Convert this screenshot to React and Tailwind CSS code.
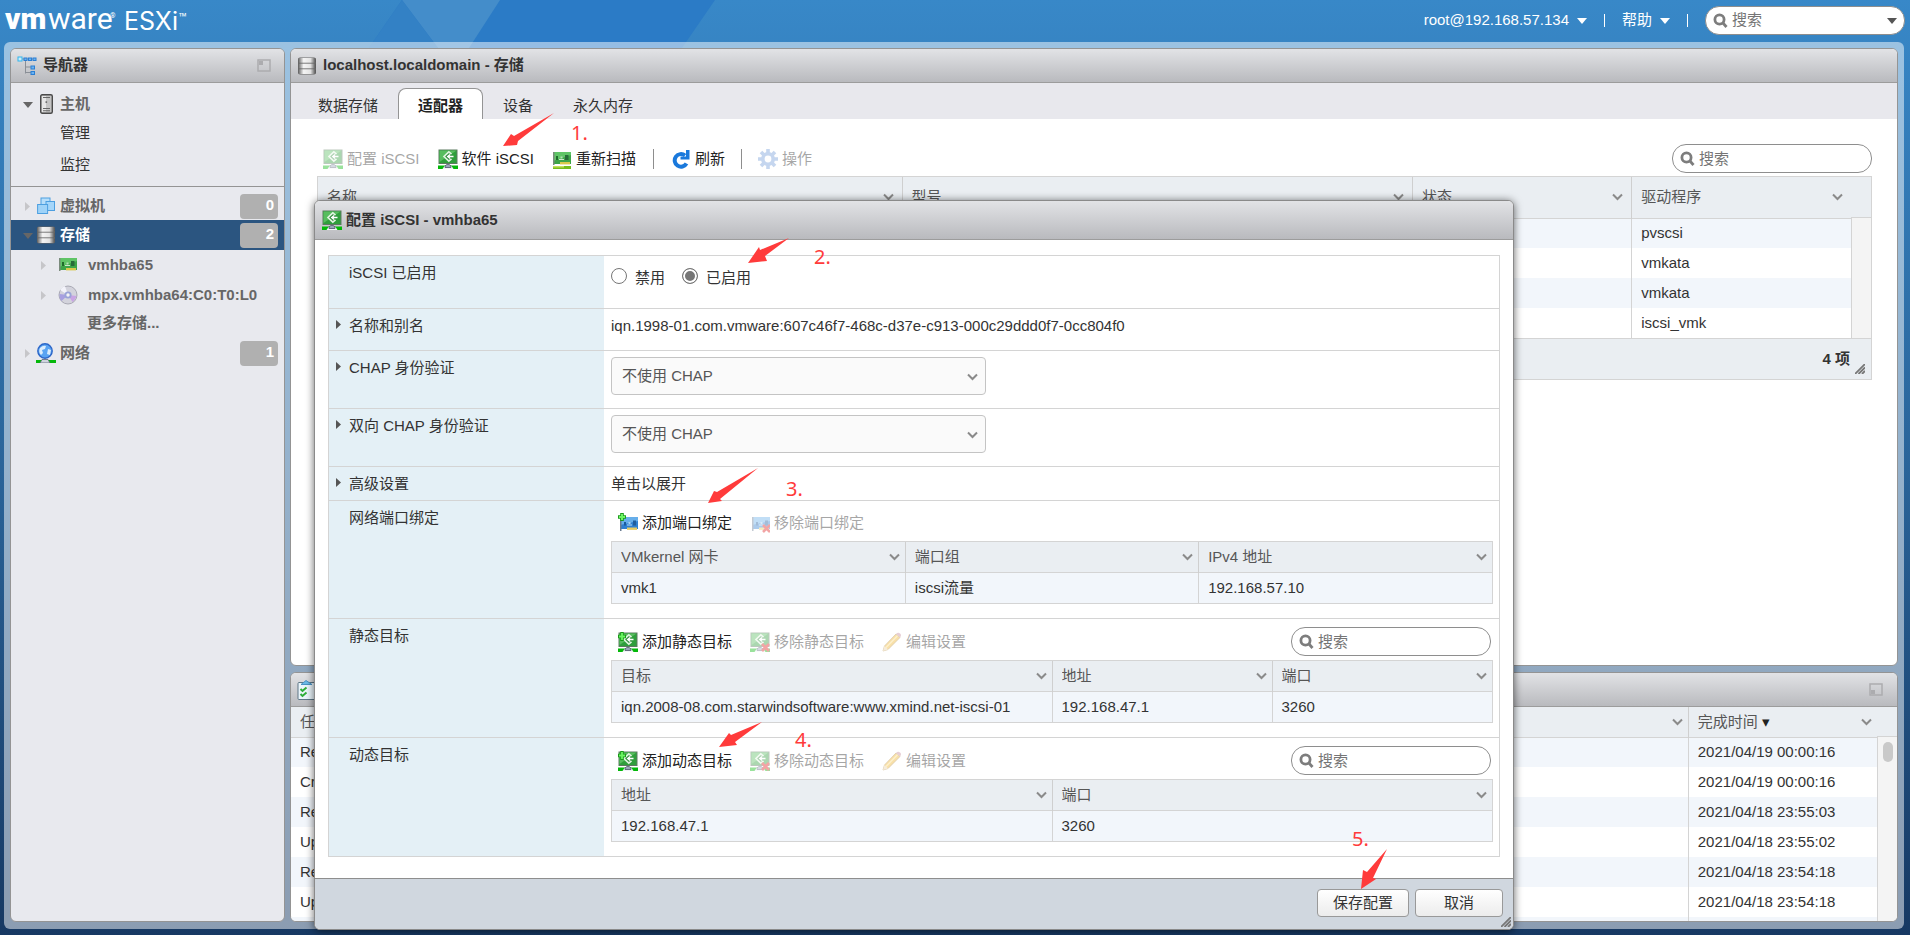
import React, { useState } from 'react';

const navIcons = { caretDown: 'M0 0h10L5 6z', caretRight: 'M0 0v9l5-4.5z' };

const Caret = ({ open, className }) => (
  <svg className={className} width="10" height="9" viewBox="0 0 10 9" fill="currentColor">
    {open ? <path transform="translate(0 2)" d={navIcons.caretDown} /> : <path transform="translate(2 0)" d={navIcons.caretRight} />}
  </svg>
);

const Chevron = () => (
  <svg className="shrink-0" width="11" height="8" viewBox="0 0 11 8" fill="none" stroke="#8a8a8a" strokeWidth="2">
    <path d="M1 1.5l4.5 4.5L10 1.5" />
  </svg>
);

const TargetIcon = ({ badge }) => (
  <svg className="shrink-0" width="20" height="20" viewBox="0 0 20 20">
    <rect x="1" y="1" width="18" height="13.5" fill="#2f9e3c" stroke="#5c7a60" />
    <path d="M1.5 1.5h17L1.5 13z" fill="#57bd5e" />
    <path d="M13.5 5.2L10.8 2.9 6 7.5l4.8 4.6 2.7-2.3" fill="#2c8a38" stroke="#dff3df" strokeWidth="1.7" />
    <path d="M15.5 7.5H10M12 5.500l-2.300 2 2.300 2" fill="none" stroke="#fff" strokeWidth="1.4" />
    <rect x="0" y="16.5" width="20" height="3.5" fill="#04b80a" />
    <path d="M4.500 20l2-3h7l2 3z" fill="#f2f4f8" />
    <path d="M7 17q3-3.500 6 0v1.500H7z" fill="#9aa5bb" stroke="#4d5568" strokeWidth=".8" />
    {badge === 'add' && <path d="M4 0v9M0 4.500h8" stroke="#189a18" strokeWidth="3.4" />}
    {badge === 'add' && <path d="M4 1v7M1 4.500h6" stroke="#6bf562" strokeWidth="1.8" />}
    {badge === 'remove' && <path d="M12 12l7 7M19 12l-7 7" stroke="#e02020" strokeWidth="2.8" />}
  </svg>
);

const CardIcon = ({ rescan }) => (
  <svg className="shrink-0" width="20" height="20" viewBox="0 0 20 20">
    <path d="M1 3h18v12H1z" fill="#3da548" />
    <path d="M1 3h18v3L1 12z" fill="#5fc466" />
    <path d="M1 3h1.5v13H1z" fill="#7a8b7c" />
    <rect x="4" y="7" width="2" height="4" fill="#1f6b2b" />
    <path d="M7 10.500h5" stroke="#c9e8ca" />
    <rect x="8.500" y="7.500" width="2" height="2" fill="#b4deb6" />
    <rect x="13" y="6" width="3.5" height="5" fill="#276b38" />
    <rect x="8" y="13" width="10" height="2.4" fill="#d8c94c" />
    {rescan && <rect x="1" y="17" width="18" height="3" fill="#76bd1c" />}
    {rescan && <rect x="1" y="17" width="11" height="1.5" fill="#c6e05a" />}
  </svg>
);

const NicIcon = ({ badge }) => (
  <svg className="shrink-0" width="20" height="20" viewBox="0 0 20 20">
    <rect x="2" y="4" width="18" height="12" fill="#2f7fd0" />
    <path d="M2 4h18v4L2 12z" fill="#66aeea" />
    <rect x="2" y="4" width="1.5" height="14" fill="#6a7c92" />
    <rect x="6" y="9" width="2" height="3.5" fill="#1b5a9c" />
    <path d="M9 12h5" stroke="#b5daf5" />
    <rect x="10.500" y="9" width="2" height="2" fill="#a5d0f2" />
    <rect x="15" y="7.500" width="3" height="5" fill="#1f5c9c" />
    <rect x="9" y="14.500" width="10" height="2.4" fill="#e8cb62" />
    {badge === 'add' && <path d="M4 0v8M0 4h8" stroke="#1c9a1c" strokeWidth="3.6" />}
    {badge === 'add' && <path d="M4 1v6M1 4h6" stroke="#6bf562" strokeWidth="2" />}
    {badge === 'remove' && <path d="M13 12l7 7M20 12l-7 7" stroke="#e02020" strokeWidth="2.6" />}
  </svg>
);

const PencilIcon = () => (
  <svg className="shrink-0" width="20" height="20" viewBox="0 0 20 20">
    <path d="M1 19l1.5-5L14 2l4 3.5L6 17.5z" fill="#f0b429" stroke="#a87a2a" strokeWidth=".8" />
    <path d="M14 2q2-2 4-.5t0 4z" fill="#c48a9a" />
    <path d="M1 19l1.5-5L6 17.5z" fill="#e9d2a8" />
    <path d="M4 15.5L15.5 3.8" stroke="#fbdc85" strokeWidth="1.3" />
  </svg>
);

const RefreshIcon = () => (
  <svg className="shrink-0" width="20" height="20" viewBox="0 0 20 20">
    <path d="M15.500 14.500A6.300 6.300 0 1 1 14 6.500" fill="none" stroke="#1a79dc" strokeWidth="4" />
    <path d="M9.500 10.500h9V1h-3.500v6.500H9.500z" fill="#1a79dc" />
  </svg>
);

const GearIcon = () => (
  <svg className="shrink-0" width="20" height="20" viewBox="0 0 20 20">
    <g stroke="#6f9ad8" strokeWidth="3.6">
      <path d="M10 0v20M0 10h20M3 3l14 14M17 3L3 17" />
    </g>
    <circle cx="10" cy="10" r="7" fill="#6f9ad8" />
    <circle cx="10" cy="10" r="3.4" fill="#fff" />
  </svg>
);

const StorageIcon = () => (
  <svg className="shrink-0" width="18" height="18" viewBox="0 0 18 18">
    <defs>
      <linearGradient id="disk" x1="0" x2="1" y1="0" y2="0">
        <stop offset="0" stopColor="#6b6b6b" />
        <stop offset=".3" stopColor="#f4f4f4" />
        <stop offset=".7" stopColor="#e4e4e4" />
        <stop offset="1" stopColor="#555" />
      </linearGradient>
    </defs>
    <rect x="0" y=".5" width="18" height="17" rx="2" fill="#666" />
    <rect x=".500" y="1" width="17" height="4.8" rx="1" fill="url(#disk)" />
    <rect x=".500" y="6.600" width="17" height="4.8" fill="url(#disk)" />
    <rect x=".500" y="12.200" width="17" height="4.8" rx="1" fill="url(#disk)" />
  </svg>
);

const HostIcon = () => (
  <svg className="shrink-0" width="13" height="20" viewBox="0 0 13 20">
    <rect x=".7" y=".7" width="11.6" height="18.6" rx="1.5" fill="#c4c4c4" stroke="#4a4a4a" strokeWidth="1.4" />
    <path d="M2 2h4v16H2z" fill="#e6e6e6" />
    <path d="M3 3.500h7M3 14.500h7M3 16.800h7" stroke="#666" strokeWidth="1.1" />
    <rect x="5.500" y="7.300" width="1.6" height="1.6" fill="#666" />
  </svg>
);

const VmIcon = () => (
  <svg className="shrink-0" width="18" height="18" viewBox="0 0 18 18" fill="#b7defa" stroke="#4d9fe0">
    <rect x="4" y="1" width="9" height="9" />
    <rect x="9" y="4.500" width="8.500" height="9" fill="#a5d6fa" />
    <rect x=".6" y="7.500" width="10" height="9" fill="#9fd3f8" />
  </svg>
);

const DiscIcon = () => (
  <svg className="shrink-0" width="20" height="20" viewBox="0 0 20 20">
    <circle cx="10" cy="10" r="9" fill="#d3d3dc" stroke="#a9a9b4" />
    <path d="M10 10L2 5a9 9 0 0 1 5-4z" fill="#f3f3fa" />
    <path d="M10 10L1.500 9a9 9 0 0 0 2 7z" fill="#a8a0e0" />
    <path d="M10 10l8.500 1a9 9 0 0 1-4 6z" fill="#c9a4e4" />
    <circle cx="10" cy="10" r="3.600" fill="#9aa3d8" />
    <circle cx="10" cy="10" r="1.700" fill="#f4f4f4" />
  </svg>
);

const NetworkIcon = () => (
  <svg className="shrink-0" width="20" height="20" viewBox="0 0 20 20">
    <circle cx="9" cy="8" r="7.200" fill="#5aa4f2" stroke="#2c66c8" strokeWidth="1.400" />
    <path d="M4 5q3-3 6-2l-1 3-3 1 1 3-2 2q-3-3-1-7zM12 6l3 1-1 5-3-1z" fill="#dcedfc" />
    <rect x="0" y="17" width="20" height="3" fill="#04b80a" />
    <path d="M4 20l2-3.500h6l2 3.500z" fill="#cfd5de" stroke="#5a6478" strokeWidth=".8" />
  </svg>
);

const TreeIcon = () => (
  <svg className="shrink-0" width="20" height="20" viewBox="0 0 20 20" fill="#6cb3f0" stroke="#2b7fd4">
    <path d="M2 3h16M8.500 3v14.500M8.500 11h6M8.500 16.500h6" fill="none" stroke="#8a8f96" />
    <rect x="1" y="1" width="4" height="4" stroke="#31b5ee" fill="#c9edfb" />
    <rect x="7" y="2" width="3" height="2.500" />
    <rect x="11.500" y="2" width="3" height="2.500" />
    <rect x="16" y="2" width="3" height="2.500" />
    <rect x="14" y="10" width="3.500" height="3" />
    <rect x="14" y="15.500" width="3.500" height="3" />
  </svg>
);

const TasksIcon = () => (
  <svg className="shrink-0" width="20" height="20" viewBox="0 0 20 20">
    <rect x="1" y="2.500" width="17" height="17" rx="1" fill="#eaf5fb" stroke="#5e7787" />
    <path d="M4 4.500L9 .5l6 4z" fill="#6bbbe8" stroke="#4a93c4" />
    <path d="M3.500 9l2 2 4-3.500M3.500 14l2 2 4-3.500" fill="none" stroke="#2fae3a" strokeWidth="2" />
  </svg>
);

const RestoreIcon = ({ low }) => (
  <svg width="14" height="13" viewBox="0 0 14 13" fill="none" stroke="#acacaf" strokeWidth="1.5">
    <rect x="1" y="1" width="12" height="11" />
    <rect x="2" y={low ? 7 : 2} width="4" height="4" fill="#acacaf" stroke="none" />
  </svg>
);

const Grip = () => (
  <svg width="10" height="10" viewBox="0 0 10 10" stroke="#777" strokeWidth="1.800">
    <path d="M0 10L10 0M3.500 10L10 3.500M7 10l3-3" />
  </svg>
);

const SearchBox = ({ label, arrow }) => (
  <label className="flex h-[29px] w-[200px] items-center rounded-[14px] border border-[#8e8e8e] bg-white px-[7px]">
    <svg className="shrink-0" width="15" height="15" viewBox="0 0 15 15" fill="none" stroke="#7d7d7d" strokeWidth="2.800">
      <circle cx="6.500" cy="6.500" r="4.600" />
      <path d="M9.500 9.500l4 4.500" />
    </svg>
    <input
      type="text"
      aria-label={label}
      placeholder="搜索"
      className="ml-1 min-w-0 flex-1 bg-transparent text-[15px] text-[#333] outline-none placeholder:text-[#757575]"
    />
    {arrow && <Caret open className="text-[#555]" />}
  </label>
);

const ToolButton = ({ icon, disabled, children }) => (
  <button type="button" disabled={disabled} className="flex items-center gap-1 px-[9px] whitespace-nowrap text-[#222] disabled:opacity-40">
    {icon}
    {children}
  </button>
);

const Panel = ({ as: Tag = 'section', title, icon, action, className, children }) => (
  <Tag className={`flex flex-col overflow-hidden rounded-md border border-[#949494] ${className}`}>
    <header className="flex h-[34px] shrink-0 items-center border-b border-[#9c9c9c] bg-linear-to-b from-[#e2e3e6] to-[#b9babe] px-[6px]">
      <span className="flex w-5 justify-center">{icon}</span>
      <h2 className="ml-[6px] flex-1 pb-0.5 font-bold text-[#333]">{title}</h2>
      {action}
    </header>
    {children}
  </Tag>
);

const DataGrid = ({ columns, rows, head, row, chevronPad = 'pr-[5px]' }) => (
  <table className="w-full table-fixed border-collapse text-left">
    <thead>
      <tr className={`border-b border-[#d4d4d4] bg-[#eaeef2] text-[#565656] ${head}`}>
        {columns.map((col, i) => (
          <th key={i} className={`p-0 font-normal ${col.width} ${i > 0 ? 'border-l border-[#cfcfcf]' : ''}`}>
            <div className={`flex items-center pl-[9px] ${chevronPad}`}>
              <span className="flex-1 truncate">
                {col.label}
                {col.sorted && <span className="ml-1 text-[#222]">▾</span>}
              </span>
              <Chevron />
            </div>
          </th>
        ))}
      </tr>
    </thead>
    <tbody>
      {rows.map((cells, r) => (
        <tr key={r} className={`odd:bg-[#f2f6fb] ${row}`}>
          {cells.map((cell, i) => (
            <td key={i} className={`truncate p-0 pl-[9px] ${i > 0 ? 'border-l border-[#d4d4d4]' : ''}`}>{cell}</td>
          ))}
        </tr>
      ))}
    </tbody>
  </table>
);

const NavRow = ({ open, icon, label, count, active, height = 'h-[30px]' }) => (
  <a href="#nav" className={`flex items-center pr-[6px] pl-3 font-bold ${height} ${active ? 'bg-[#2b5580] text-white' : 'text-[#666]'}`}>
    <Caret open={open} className={open ? 'text-[#666]' : 'text-[#c6c6c9]'} />
    <span className="mr-1 ml-[3px] flex w-5 justify-center">{icon}</span>
    <span className="flex-1">{label}</span>
    {count !== undefined && (
      <span className="flex h-[25px] w-[38px] items-center justify-end rounded-sm bg-[#b0b0b0] pr-1 pb-0.5 text-white">{count}</span>
    )}
  </a>
);

const NavChild = ({ icon, label }) => (
  <a href="#nav" className="flex h-[30px] items-center pl-[28px] font-bold text-[#666]">
    <Caret className="text-[#c6c6c9]" />
    <span className="mr-[10px] ml-[9px] flex">{icon}</span>
    {label}
  </a>
);

const Navigator = () => (
  <Panel as="nav" title="导航器" icon={<TreeIcon />} action={<span className="mr-[7px]"><RestoreIcon /></span>} className="w-[275px] shrink-0 bg-[#e8e9ee]">
    <div className="border-b border-[#949494] pt-[6px] pb-[3px]">
      <NavRow open icon={<HostIcon />} label="主机" />
      <a href="#manage" className="flex h-7 items-center pl-[49px] text-[#333]">管理</a>
      <a href="#monitor" className="flex h-9 items-center pl-[49px] text-[#333]">监控</a>
    </div>
    <div className="pt-[5px]">
      <NavRow icon={<VmIcon />} label="虚拟机" count={0} height="h-7" />
      <NavRow open active icon={<StorageIcon />} label="存储" count={2} />
      <NavChild icon={<CardIcon />} label="vmhba65" />
      <NavChild icon={<DiscIcon />} label="mpx.vmhba64:C0:T0:L0" />
      <a href="#more" className="flex h-[25px] items-center pl-[76px] font-bold text-[#666]">更多存储...</a>
      <NavRow icon={<NetworkIcon />} label="网络" count={1} height="h-9" />
    </div>
  </Panel>
);

const adapterColumns = [
  { label: '名称', width: 'w-[38.1%]' },
  { label: '型号', width: 'w-[33.3%]' },
  { label: '状态', width: 'w-[14.3%]' },
  { label: '驱动程序', width: 'w-[14.3%]' },
];

const adapterRows = [
  ['', '', '', 'pvscsi'],
  ['', '', '', 'vmkata'],
  ['', '', '', 'vmkata'],
  ['', '', '', 'iscsi_vmk'],
];

const tabs = ['数据存储', '适配器', '设备', '永久内存'];

const StoragePanel = () => {
  const [tab, setTab] = useState('适配器');

  return (
    <Panel as="main" title="localhost.localdomain - 存储" icon={<StorageIcon />} className="flex-1 bg-white">
      <div role="tablist" className="flex h-9 items-end bg-[#e8e8ed] pl-[7px]">
        {tabs.map((t) => (
          <button
            key={t}
            type="button"
            role="tab"
            aria-selected={t === tab}
            onClick={() => setTab(t)}
            className={`h-[31px] rounded-t-lg border border-b-0 px-[19px] pt-1 ${
              t === tab ? 'border-[#949494] bg-white font-bold text-[#222]' : 'border-transparent text-[#333]'
            }`}
          >
            {t}
          </button>
        ))}
      </div>
      <div className="flex h-[57px] items-center pt-[22px] pr-[25px] pl-[23px]">
        <ToolButton disabled icon={<TargetIcon />}>配置 iSCSI</ToolButton>
        <ToolButton icon={<TargetIcon />}>软件 iSCSI</ToolButton>
        <ToolButton icon={<CardIcon rescan />}>重新扫描</ToolButton>
        <span className="mx-2 h-5 w-px bg-[#8e8e8e]" />
        <ToolButton icon={<RefreshIcon />}>刷新</ToolButton>
        <span className="mx-[7px] h-5 w-px bg-[#8e8e8e]" />
        <ToolButton disabled icon={<GearIcon />}>操作</ToolButton>
        <div className="ml-auto">
          <SearchBox label="搜索适配器" />
        </div>
      </div>
      <div className="mr-[25px] ml-[26px] border border-[#d4d4d4]">
        <div className="flex">
          <div className="min-w-0 flex-1">
            <DataGrid columns={adapterColumns} rows={adapterRows} head="h-[41px]" row="h-[30px]" chevronPad="pr-2" />
          </div>
          <div className="flex w-5 flex-col">
            <div className="h-[41px] border-b border-[#d4d4d4] bg-[#eaeef2]" />
            <div className="flex-1 border-l border-[#d4d4d4] bg-[#f4f4f4]" />
          </div>
        </div>
        <div className="flex h-[41px] items-center justify-end border-t border-[#d4d4d4] bg-[#eaeef2] pr-[6px] font-bold">
          4 项
          <span className="mt-5 ml-[5px]"><Grip /></span>
        </div>
      </div>
    </Panel>
  );
};

const taskColumns = [
  { label: '任务', width: 'w-[88.1%]' },
  { label: '完成时间', width: 'w-[11.9%]', sorted: true },
];

const taskRows = [
  ['Refresh', '2021/04/19 00:00:16'],
  ['Create', '2021/04/19 00:00:16'],
  ['Refresh', '2021/04/18 23:55:03'],
  ['Update', '2021/04/18 23:55:02'],
  ['Refresh', '2021/04/18 23:54:18'],
  ['Update', '2021/04/18 23:54:18'],
  ['', ''],
];

const TasksPanel = () => (
  <Panel title="近期任务" icon={<TasksIcon />} action={<span className="mr-2"><RestoreIcon low /></span>} className="h-[250px] shrink-0 bg-white">
    <div className="flex min-h-0 flex-1">
      <div className="min-w-0 flex-1 overflow-hidden">
        <DataGrid columns={taskColumns} rows={taskRows} head="h-[30px]" row="h-[30px]" />
      </div>
      <div className="flex w-5 flex-col">
        <div className="h-[30px] border-b border-[#d4d4d4] bg-[#eaeef2]" />
        <div className="flex flex-1 justify-center border-l border-[#d4d4d4] bg-[#f4f4f4] pt-[5px]">
          <span className="h-5 w-[10px] rounded-full bg-[#c9c9c9]" />
        </div>
      </div>
    </div>
  </Panel>
);

const FormRow = ({ label, htmlFor, expandable, className = '', children }) => (
  <div className={`flex border-b border-[#d4d4d4] last:border-b-0 ${className}`}>
    <div className="flex w-[275px] shrink-0 bg-[#e4f0f6] pt-[5px] leading-6">
      <span className="w-5 pt-[6px] pl-[5px] text-[#555]">{expandable && <Caret />}</span>
      <label htmlFor={htmlFor}>{label}</label>
    </div>
    <div className="min-w-0 flex-1 pr-[6px] pl-[7px]">{children}</div>
  </div>
);

const ChapSelect = ({ id }) => (
  <div className="relative mt-[6px] h-[38px] w-[375px]">
    <select id={id} className="h-full w-full appearance-none rounded-sm border border-[#c4c4c4] bg-[#fafafa] px-[10px] text-[#565656]">
      <option>不使用 CHAP</option>
    </select>
    <span className="pointer-events-none absolute top-4 right-2"><Chevron /></span>
  </div>
);

const TargetTools = ({ name }) => (
  <div className="flex h-[41px] items-center pt-1 pr-0.5">
    <div className="-ml-0.5 flex">
      <ToolButton icon={<TargetIcon badge="add" />}>添加{name}</ToolButton>
      <ToolButton disabled icon={<TargetIcon badge="remove" />}>移除{name}</ToolButton>
      <ToolButton disabled icon={<PencilIcon />}>编辑设置</ToolButton>
    </div>
    <div className="ml-auto">
      <SearchBox label={`搜索${name}`} />
    </div>
  </div>
);

const bindingColumns = [
  { label: 'VMkernel 网卡', width: 'w-1/3' },
  { label: '端口组', width: 'w-1/3' },
  { label: 'IPv4 地址', width: 'w-1/3' },
];

const staticColumns = [
  { label: '目标', width: 'w-1/2' },
  { label: '地址', width: 'w-1/4' },
  { label: '端口', width: 'w-1/4' },
];

const dynamicColumns = [
  { label: '地址', width: 'w-1/2' },
  { label: '端口', width: 'w-1/2' },
];

const MiniGrid = ({ columns, rows }) => (
  <div className="mb-[14px] border border-[#d4d4d4]">
    <DataGrid columns={columns} rows={rows} head="h-[30px]" row="h-[31px]" />
  </div>
);

const IscsiDialog = () => {
  const [enabled, setEnabled] = useState(true);
  const radio =
    'size-4 appearance-none rounded-full border border-[#767676] bg-white checked:bg-[#767676] checked:shadow-[inset_0_0_0_2px_white]';

  return (
    <div
      role="dialog"
      aria-labelledby="dialog-title"
      className="absolute top-[200px] left-[314px] w-[1200px] overflow-hidden rounded-md border border-[#8a8a8a] bg-white shadow-[0_1px_8px_rgba(0,0,0,0.6)]"
    >
      <header className="flex h-[39px] items-center border-b border-[#9c9c9c] bg-linear-to-b from-[#e2e3e6] to-[#b9babe] pl-[7px]">
        <TargetIcon />
        <h2 id="dialog-title" className="ml-1 font-bold text-[#333]">配置 iSCSI - vmhba65</h2>
      </header>
      <form className="px-[13px] pt-[15px] pb-[21px]">
        <div className="border border-[#d4d4d4]">
          <FormRow label="iSCSI 已启用" className="h-[53px]">
            <div className="flex items-center gap-2 pt-2">
              <input id="iscsi-off" name="iscsi" type="radio" className={radio} checked={!enabled} onChange={() => setEnabled(false)} />
              <label htmlFor="iscsi-off" className="mr-[9px] pt-1">禁用</label>
              <input id="iscsi-on" name="iscsi" type="radio" className={radio} checked={enabled} onChange={() => setEnabled(true)} />
              <label htmlFor="iscsi-on" className="pt-1">已启用</label>
            </div>
          </FormRow>
          <FormRow label="名称和别名" expandable className="h-[42px]">
            <p className="pt-[5px] leading-6">iqn.1998-01.com.vmware:607c46f7-468c-d37e-c913-000c29ddd0f7-0cc804f0</p>
          </FormRow>
          <FormRow label="CHAP 身份验证" htmlFor="chap" expandable className="h-[58px]">
            <ChapSelect id="chap" />
          </FormRow>
          <FormRow label="双向 CHAP 身份验证" htmlFor="mutual-chap" expandable className="h-[58px]">
            <ChapSelect id="mutual-chap" />
          </FormRow>
          <FormRow label="高级设置" expandable className="h-[34px]">
            <p className="pt-[5px] leading-6">单击以展开</p>
          </FormRow>
          <FormRow label="网络端口绑定">
            <div className="-ml-0.5 flex h-10 items-center pt-1">
              <ToolButton icon={<NicIcon badge="add" />}>添加端口绑定</ToolButton>
              <ToolButton disabled icon={<NicIcon badge="remove" />}>移除端口绑定</ToolButton>
            </div>
            <MiniGrid columns={bindingColumns} rows={[['vmk1', 'iscsi流量', '192.168.57.10']]} />
          </FormRow>
          <FormRow label="静态目标">
            <TargetTools name="静态目标" />
            <MiniGrid columns={staticColumns} rows={[['iqn.2008-08.com.starwindsoftware:www.xmind.net-iscsi-01', '192.168.47.1', '3260']]} />
          </FormRow>
          <FormRow label="动态目标">
            <TargetTools name="动态目标" />
            <MiniGrid columns={dynamicColumns} rows={[['192.168.47.1', '3260']]} />
          </FormRow>
        </div>
      </form>
      <footer className="flex h-[51px] items-start justify-end gap-[6px] border-t border-[#8e8e8e] bg-[#d0d7df] pt-[10px] pr-0.5">
        <button type="button" className="h-7 w-[92px] rounded-sm border border-[#999] bg-linear-to-b from-white to-[#ececec]">保存配置</button>
        <button type="button" className="h-7 w-[88px] rounded-sm border border-[#999] bg-linear-to-b from-white to-[#ececec]">取消</button>
        <span className="-ml-2 self-end pb-0.5"><Grip /></span>
      </footer>
    </div>
  );
};

const Logo = () => (
  <svg width="200" height="42" viewBox="0 0 200 42" fill="#fff" aria-label="vmware ESXi">
    <text x="5" y="29" fontFamily="Roboto" fontSize="30" fontWeight="900">vm</text>
    <text x="48" y="29" fontFamily="Roboto" fontSize="30">ware</text>
    <text x="110" y="18" fontFamily="Roboto" fontSize="7">®</text>
    <text x="124" y="30" fontFamily="Inter" fontSize="25">ESXi</text>
    <text x="179" y="20" fontFamily="Open Sans" fontSize="10">™</text>
  </svg>
);

const TopBar = () => (
  <header className="flex h-[42px] shrink-0 items-center pr-[5px] text-white">
    <a href="#home"><Logo /></a>
    <div className="mb-[2px] ml-auto flex items-center">
      <button type="button" className="flex items-center gap-2">
        root@192.168.57.134
        <Caret open />
      </button>
      <span className="mx-[17px] h-[13px] w-px bg-white" />
      <button type="button" className="flex items-center gap-2">
        帮助
        <Caret open />
      </button>
      <span className="mx-[17px] h-[13px] w-px bg-white" />
      <SearchBox label="全局搜索" arrow />
    </div>
  </header>
);

const steps = [
  { n: '1.', x: 571, y: 140, arrow: '503,146 511,134 514,136 554,113 518,141 517,145' },
  { n: '2.', x: 814, y: 264, arrow: '748,263 759,247 760,250 789,238 765,256 767,261' },
  { n: '3.', x: 786, y: 496, arrow: '708,503 714,491 717,492 758,468 720,499 722,501' },
  { n: '4.', x: 795, y: 747, arrow: '719,747 729,733 731,735 762,722 735,742 737,745' },
  { n: '5.', x: 1352, y: 846, arrow: '1361,889 1363,870 1367,872 1387,849 1373,878 1376,879' },
];

const Annotations = () => (
  <svg className="pointer-events-none absolute inset-0 h-full w-full" fill="#ff3b3b">
    {steps.map((s) => (
      <g key={s.n}>
        <polygon points={s.arrow} />
        <text x={s.x} y={s.y} fontFamily="Noto Sans" fontSize="20">{s.n}</text>
      </g>
    ))}
  </svg>
);

const App = () => (
  <div className="relative flex min-h-screen flex-col overflow-hidden bg-linear-to-b from-[#3888c8] via-[#2a6499] to-[#173963] font-['Liberation_Sans','Noto_Sans_CJK_SC',sans-serif] text-[15px] leading-5 text-[#333]">
    <svg className="absolute top-0 left-0" width="720" height="48">
      <polygon points="402,0 715,0 682,48 369,48" fill="#2b7bc6" />
      <polygon points="402,0 500,0 469,48 438,48" fill="#448dca" />
      <polygon points="402,0 438,48 369,48" fill="#3381c5" />
    </svg>
    <div className="relative flex flex-1 flex-col">
      <TopBar />
      <div className="mr-[6px] mb-[6px] ml-1 flex flex-1 gap-[5px] rounded-md bg-white/50 px-[6px] pt-[6px] pb-[7px]">
        <Navigator />
        <div className="flex min-w-0 flex-1 flex-col gap-[6px]">
          <StoragePanel />
          <TasksPanel />
        </div>
      </div>
    </div>
    <IscsiDialog />
    <Annotations />
  </div>
);

export default App;
